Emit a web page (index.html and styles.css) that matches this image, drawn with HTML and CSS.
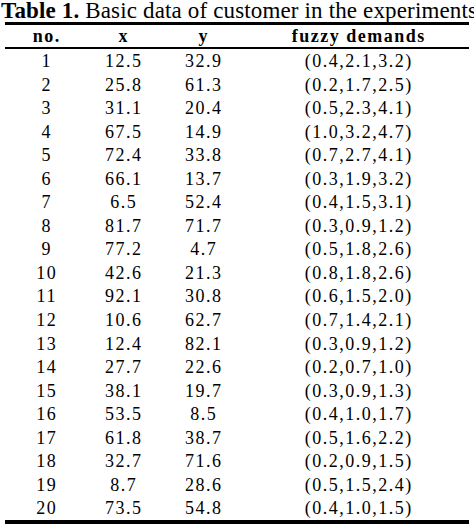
FILE: index.html
```html
<!DOCTYPE html>
<html>
<head>
<meta charset="utf-8">
<link rel="stylesheet" href="styles.css">
</head>
<body>
<div class="title"><b>Table 1.</b> Basic data of customer in the experiments</div>
<div class="table">
  <div class="row head"><span>no.</span><span>x</span><span>y</span><span>fuzzy demands</span></div>
  <div class="body">
    <div class="row"><span>1</span><span>12.5</span><span>32.9</span><span>(0.4,2.1,3.2)</span></div>
    <div class="row"><span>2</span><span>25.8</span><span>61.3</span><span>(0.2,1.7,2.5)</span></div>
    <div class="row"><span>3</span><span>31.1</span><span>20.4</span><span>(0.5,2.3,4.1)</span></div>
    <div class="row"><span>4</span><span>67.5</span><span>14.9</span><span>(1.0,3.2,4.7)</span></div>
    <div class="row"><span>5</span><span>72.4</span><span>33.8</span><span>(0.7,2.7,4.1)</span></div>
    <div class="row"><span>6</span><span>66.1</span><span>13.7</span><span>(0.3,1.9,3.2)</span></div>
    <div class="row"><span>7</span><span>6.5</span><span>52.4</span><span>(0.4,1.5,3.1)</span></div>
    <div class="row"><span>8</span><span>81.7</span><span>71.7</span><span>(0.3,0.9,1.2)</span></div>
    <div class="row"><span>9</span><span>77.2</span><span>4.7</span><span>(0.5,1.8,2.6)</span></div>
    <div class="row"><span>10</span><span>42.6</span><span>21.3</span><span>(0.8,1.8,2.6)</span></div>
    <div class="row"><span>11</span><span>92.1</span><span>30.8</span><span>(0.6,1.5,2.0)</span></div>
    <div class="row"><span>12</span><span>10.6</span><span>62.7</span><span>(0.7,1.4,2.1)</span></div>
    <div class="row"><span>13</span><span>12.4</span><span>82.1</span><span>(0.3,0.9,1.2)</span></div>
    <div class="row"><span>14</span><span>27.7</span><span>22.6</span><span>(0.2,0.7,1.0)</span></div>
    <div class="row"><span>15</span><span>38.1</span><span>19.7</span><span>(0.3,0.9,1.3)</span></div>
    <div class="row"><span>16</span><span>53.5</span><span>8.5</span><span>(0.4,1.0,1.7)</span></div>
    <div class="row"><span>17</span><span>61.8</span><span>38.7</span><span>(0.5,1.6,2.2)</span></div>
    <div class="row"><span>18</span><span>32.7</span><span>71.6</span><span>(0.2,0.9,1.5)</span></div>
    <div class="row"><span>19</span><span>8.7</span><span>28.6</span><span>(0.5,1.5,2.4)</span></div>
    <div class="row"><span>20</span><span>73.5</span><span>54.8</span><span>(0.4,1.0,1.5)</span></div>
  </div>
</div>
</body>
</html>
```
FILE: styles.css
```css
html, body {
  margin: 0;
  padding: 0;
  background: #ffffff;
  color: #000000;
}
body {
  width: 474px;
  height: 524px;
  overflow: hidden;
}
.title {
  font-family: "Liberation Serif", "Times New Roman", serif;
  font-size: 23px;
  line-height: 22px;
  height: 22px;
  white-space: nowrap;
  padding-left: 1px;
  letter-spacing: 0.15px;
}
.title b {
  font-weight: bold;
}
.table {
  margin: 0 5px;
  border-top: 3px solid #000;
  font-family: "Liberation Serif", "Times New Roman", serif;
  font-size: 18px;
  letter-spacing: 1.5px;
}
.row {
  display: grid;
  grid-template-columns: 82px 72px 88px 222px;
  align-items: center;
  text-align: center;
  height: 23.55px;
  line-height: 23.55px;
  white-space: nowrap;
}
.row span {
  display: block;
  padding-top: 1px;
  padding-left: 1.5px;
}
.row.head {
  height: 22px;
  line-height: 22px;
  font-weight: bold;
  border-bottom: 2px solid #000;
}
.row.head span {
  padding-top: 0;
}
.body {
  border-bottom: 5px solid #000;
}
```
